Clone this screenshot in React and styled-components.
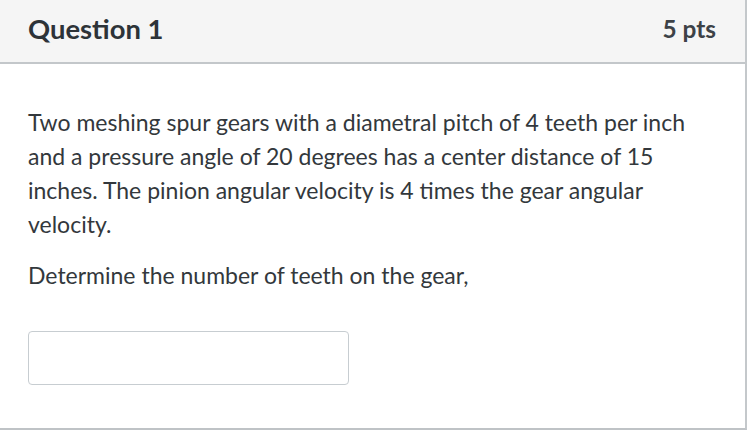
import React from "react";
import styled, { createGlobalStyle } from "styled-components";

const GlobalStyle = createGlobalStyle`
  html, body {
    margin: 0;
    padding: 0;
    background: #fff;
  }
  body {
    font-family: Lato, "Noto Sans", "Liberation Sans", sans-serif;
    color: #2d3b45;
  }
`;

const Card = styled.div`
  width: 747px;
  height: 430px;
  box-sizing: border-box;
  background: #fff;
  border-right: 2px solid #c4c8cb;
  border-bottom: 2px solid #bfc3c6;
  display: flex;
  flex-direction: column;
`;

const Header = styled.div`
  height: 64px;
  box-sizing: border-box;
  background: #f5f5f5;
  border-bottom: 2px solid #c3c7ca;
  display: flex;
  align-items: center;
  justify-content: space-between;
  padding: 0 29px 5px 28px;
`;

const Title = styled.h2`
  margin: 0;
  font-size: 27.4px;
  font-weight: 700;
  color: #2d3338;
`;

const Points = styled.div`
  font-size: 24.4px;
  font-weight: 700;
  color: #3d4247;
`;

const Body = styled.div`
  padding: 41px 28px 0 28px;
`;

const Para = styled.p`
  margin: 0 0 ${(p) => (p.gap ? p.gap : 17)}px 0;
  font-size: 23px;
  line-height: 34px;
  color: #33383c;
`;

const Answer = styled.input`
  display: block;
  margin-top: 39px;
  width: 321px;
  height: 54px;
  box-sizing: border-box;
  border: 1px solid #c7cdd1;
  border-radius: 4px;
  background: #fff;
  font-family: inherit;
  font-size: 18px;
  padding: 0 10px;
  outline: none;
`;

export default function App() {
  return (
    <>
      <GlobalStyle />
      <Card>
        <Header>
          <Title>Question 1</Title>
          <Points>5 pts</Points>
        </Header>
        <Body>
          <Para>
            Two meshing spur gears with a diametral pitch of 4 teeth per inch
            and a pressure angle of 20 degrees has a center distance of 15
            inches. The pinion angular velocity is 4 times the gear angular
            velocity.
          </Para>
          <Para gap={0}>Determine the number of teeth on the gear,</Para>
          <Answer type="text" />
        </Body>
      </Card>
    </>
  );
}
